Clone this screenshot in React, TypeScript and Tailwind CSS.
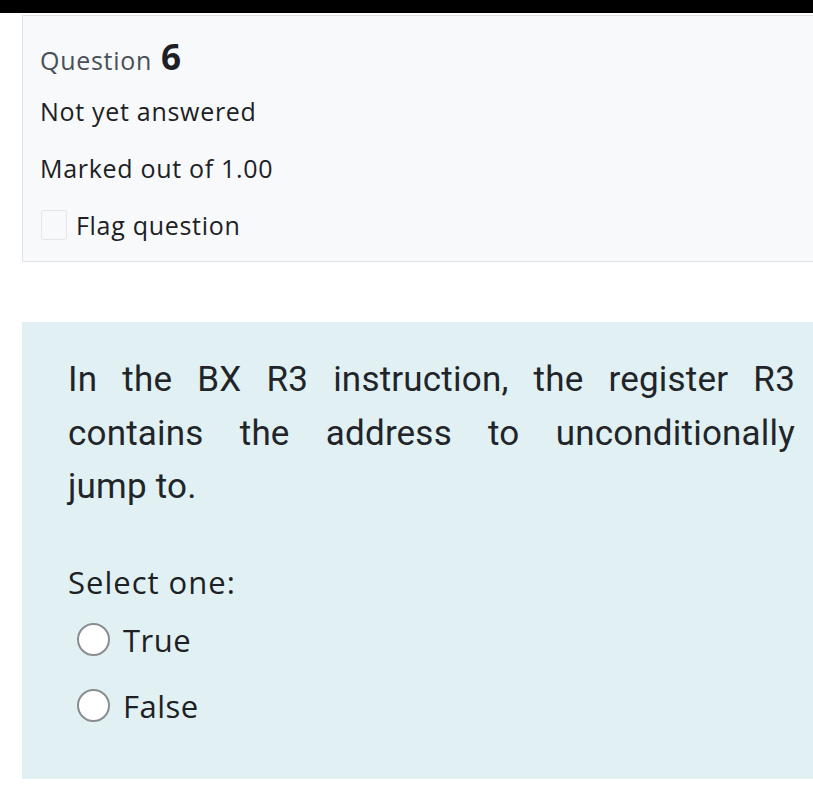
export default function App() {
  return (
    <div className="min-h-[801px] w-[813px] overflow-hidden bg-white font-['Open_Sans',Arial,sans-serif] text-[#1d2125]">
      <div className="h-[13px] bg-black" />
      <div className="pl-[22px] pt-[2px]">
        <div className="h-[247px] border border-r-0 border-[#dee2e6] bg-[#f8f9fa] pl-[17px] pt-[26px] text-[25px] tracking-[0.7px]">
          <div className="flex h-[30px] items-baseline leading-[30px]">
            <span className="text-[#495057]">Question</span>
            <span className="ml-[9px] text-[35px] font-bold">6</span>
          </div>
          <p className="mt-[26px] h-[26px] leading-[26px]">Not yet answered</p>
          <p className="mt-[31px] h-[26px] leading-[26px]">Marked out of 1.00</p>
          <div className="mt-[29px] flex h-[30px] items-center">
            <span className="ml-[1px] h-[30px] w-[26px] rounded-[3px] border border-[#e3e6e9] bg-[#f8f9fa]" />
            <span className="ml-[9px] leading-[26px]">Flag question</span>
          </div>
        </div>
        <div className="mt-[60px] h-[457px] bg-[#e1f1f3] pl-[46px] pr-[18px] pt-[31px]">
          <p className="text-justify font-['Roboto',sans-serif] text-[35px] leading-[53.5px] tracking-[0.2px] text-[#212529]">
            In the BX R3 instruction, the register R3 contains the address to unconditionally{' '}
            <span className="whitespace-nowrap">jump to.</span>
          </p>
          <p className="mt-[51px] h-[34px] text-[31px] leading-[34px] tracking-[1px]">Select one:</p>
          <div className="mt-[24px] flex flex-col gap-[32px] pl-[9px]">
            {['True', 'False'].map(opt => (
              <label key={opt} className="flex h-[34px] items-center">
                <span className="h-[33px] w-[33px] rounded-full border-[2px] border-[#8a8d90] bg-white" />
                <span className="ml-[13px] text-[31px] leading-[34px] tracking-[0.5px]">{opt}</span>
              </label>
            ))}
          </div>
        </div>
      </div>
    </div>
  );
}
